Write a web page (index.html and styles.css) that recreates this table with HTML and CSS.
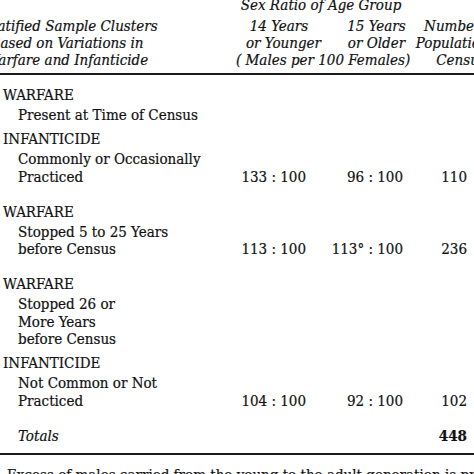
FILE: index.html
```html
<!DOCTYPE html>
<html>
<head>
<meta charset="utf-8">
<link rel="stylesheet" href="styles.css">
</head>
<body>
<div class="page">
  <div class="head grid">
    <div class="h-label">Stratified Sample Clusters<br>Based on Variations in<br>Warfare and Infanticide</div>
    <div class="h-sex">Sex Ratio of Age Group</div>
    <div class="h-c1">14 Years<br>or Younger</div>
    <div class="h-c2">15 Years<br>or Older</div>
    <div class="h-males">( Males per 100 Females)</div>
    <div class="h-c3">Number of<br>Population at<br>Census</div>
  </div>
  <div class="rule-top"></div>
  <div class="body grid">
    <div class="label">
      <div class="cat">WARFARE</div>
      <div class="sub">Present at Time of Census</div>
      <div class="cat second">INFANTICIDE</div>
      <div class="sub">Commonly or Occasionally<br>Practiced</div>
    </div>
    <div class="num n1">133 : 100</div>
    <div class="num n2">96 : 100</div>
    <div class="num n3">110</div>

    <div class="label group">
      <div class="cat">WARFARE</div>
      <div class="sub">Stopped 5 to 25 Years<br>before Census</div>
    </div>
    <div class="num n1 group">113 : 100</div>
    <div class="num n2 group">113° : 100</div>
    <div class="num n3 group">236</div>

    <div class="label group">
      <div class="cat">WARFARE</div>
      <div class="sub">Stopped 26 or<br>More Years<br>before Census</div>
      <div class="cat second">INFANTICIDE</div>
      <div class="sub">Not Common or Not<br>Practiced</div>
    </div>
    <div class="num n1 group">104 : 100</div>
    <div class="num n2 group">92 : 100</div>
    <div class="num n3 group">102</div>

    <div class="label group"><div class="sub totals">Totals</div></div>
    <div class="num n1 group"></div>
    <div class="num n2 group"></div>
    <div class="num n3 group total">448</div>
  </div>
  <div class="rule-bottom"></div>
  <p class="note">Excess of males carried from the young to the adult generation is probably due</p>
</div>
</body>
</html>
```
FILE: styles.css
```css
html, body {
  margin: 0;
  padding: 0;
  background: #fff;
}
body {
  width: 474px;
  height: 474px;
  overflow: hidden;
  font-family: "DejaVu Serif Condensed", "DejaVu Serif", "Liberation Serif", serif;
  font-stretch: condensed;
  font-size: 15px;
  line-height: 17.5px;
  color: #111;
  -webkit-text-stroke: 0.2px #111;
}
.page {
  width: 540px;
  margin-left: -30px;
}
.grid {
  display: grid;
  grid-template-columns: 262px 80px 98px 100px;
}
.head {
  margin-top: -3px;
  grid-template-rows: 21px auto auto auto;
  font-style: italic;
  line-height: 17px;
  padding-bottom: 4px;
}
.h-label {
  grid-column: 1;
  grid-row: 2 / 5;
  text-align: center;
  padding-right: 68px;
  white-space: nowrap;
}
.h-sex {
  grid-column: 2 / 4;
  grid-row: 1;
  text-align: center;
  white-space: nowrap;
}
.h-c1 {
  grid-column: 2;
  grid-row: 2 / 4;
  text-align: center;
  padding-left: 14px;
  white-space: nowrap;
}
.h-c2 {
  grid-column: 3;
  grid-row: 2 / 4;
  text-align: center;
  padding-left: 31px;
  white-space: nowrap;
}
.h-males {
  grid-column: 2 / 4;
  grid-row: 4;
  text-align: center;
  padding-left: 4px;
  white-space: nowrap;
}
.h-c3 {
  grid-column: 4;
  grid-row: 2 / 5;
  text-align: center;
  padding-left: 2px;
  white-space: nowrap;
}
.rule-top {
  height: 2px;
  background: #1a1a1a;
}
.body {
  padding-top: 12px;
  padding-bottom: 8px;
}
.label {
  padding-left: 33px;
  white-space: nowrap;
}
.cat {
  margin-bottom: 2.5px;
}
.cat.second {
  margin-top: 6.5px;
}
.sub {
  padding-left: 15px;
}
.totals {
  font-style: italic;
}
.group {
  margin-top: 17.5px;
}
.num {
  align-self: end;
  text-align: right;
  white-space: nowrap;
}
.n1 { padding-right: 6px; }
.n2 { padding-right: 7px; }
.n3 { padding-right: 43px; }
.total { font-weight: bold; }
.rule-bottom {
  height: 1.5px;
  background: #1a1a1a;
}
.note {
  margin: 12px 0 0 0;
  padding-left: 37px;
  white-space: nowrap;
}
```
